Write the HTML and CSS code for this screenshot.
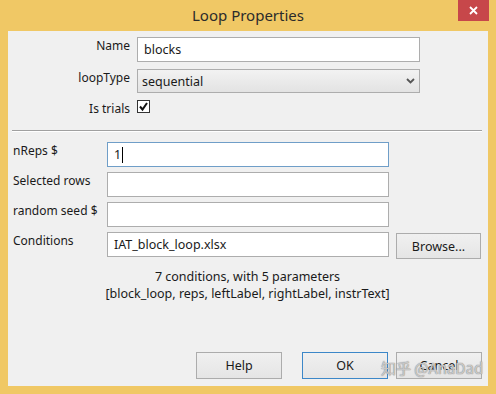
FILE: index.html
```html
<!DOCTYPE html>
<html lang="en">
<head>
    <meta charset="UTF-8">
    <title>Loop Properties</title>
    <link rel="stylesheet" href="styles.css">
</head>
<body>

    <div class="window">
        <div class="titlebar">
            <span class="title">Loop Properties</span>
            <div class="close">
                <svg width="11" height="11" viewBox="0 0 11 11">
                    <path d="M2 2 L9 9 M9 2 L2 9" stroke="#fff" stroke-width="1.8"/>
                </svg>
            </div>
        </div>

        <div class="client">
            <div class="top-form">
                <label class="lbl">Name</label>
                <div class="field name-field">blocks</div>

                <label class="lbl">loopType</label>
                <div class="field select">
                    <span>sequential</span>
                    <svg width="9" height="6" viewBox="0 0 9 6">
                        <path d="M1 1 L4.5 4.5 L8 1" fill="none" stroke="#555" stroke-width="1.8"/>
                    </svg>
                </div>

                <label class="lbl">Is trials</label>
                <div class="checkbox">
                    <svg width="11" height="11" viewBox="0 0 11 11">
                        <path d="M2 5.5 L4.5 8.5 L9 2" fill="none" stroke="#111" stroke-width="2"/>
                    </svg>
                </div>
            </div>

            <div class="separator"></div>

            <div class="bottom-form">
                <label class="lbl2">nReps $</label>
                <div class="field focused">1<span class="caret"></span></div>
                <div></div>

                <label class="lbl2">Selected rows</label>
                <div class="field"></div>
                <div></div>

                <label class="lbl2">random seed $</label>
                <div class="field"></div>
                <div></div>

                <label class="lbl2">Conditions</label>
                <div class="field">IAT_block_loop.xlsx</div>
                <button class="btn browse">Browse...</button>
            </div>

            <div class="info">
                <p>7 conditions, with 5 parameters</p>
                <p>[block_loop, reps, leftLabel, rightLabel, instrText]</p>
            </div>

            <div class="actions">
                <button class="btn">Help</button>
                <button class="btn default">OK</button>
                <button class="btn">Cancel</button>
            </div>
        </div>

        <div class="watermark">知乎 @AnaDad</div>
    </div>

</body>
</html>
```

FILE: styles.css
```css
* {
    box-sizing: border-box;
}
body {
    margin: 0;
    font-family: "Noto Sans", "Open Sans", sans-serif;
    font-size: 12px;
    color: #1a1a1a;
}
.window {
    position: relative;
    width: 496px;
    height: 394px;
    background: #f0c865;
    padding: 0 8px 8px 8px;
    display: flex;
    flex-direction: column;
}
.titlebar {
    height: 31px;
    display: flex;
    justify-content: center;
    align-items: center;
    position: relative;
}
.title {
    font-size: 15px;
    color: #2b2b2b;
    margin-top: -2px;
}
.close {
    position: absolute;
    right: -1px;
    top: 0;
    width: 31px;
    height: 21px;
    background: #c7474a;
    display: flex;
    justify-content: center;
    align-items: center;
}
.client {
    flex: 1;
    background: #f0f0f0;
    display: flex;
    flex-direction: column;
    padding: 6px 6px 7px 5px;
}
.top-form {
    display: grid;
    grid-template-columns: 117px 283px;
    column-gap: 7px;
    grid-template-rows: 25px 24px 13px;
    row-gap: 7px;
}
.lbl {
    text-align: right;
    line-height: 18px;
}
.field {
    background: #fff;
    border: 1px solid #adadad;
    height: 25px;
    padding: 0 6px;
    display: flex;
    align-items: center;
    font-size: 12.5px;
}
.select {
    height: 24px;
    background: linear-gradient(#f2f2f2, #e3e3e3);
    justify-content: space-between;
    padding: 0 4px 0 4px;
}
.checkbox {
    width: 13px;
    height: 13px;
    border: 1px solid #333;
    background: #fff;
    display: flex;
    align-items: center;
    justify-content: center;
}
.separator {
    margin: 17px 0 0 -1px;
    width: 470px;
    height: 2px;
    border-top: 1px solid #a0a0a0;
    border-bottom: 1px solid #fff;
}
.bottom-form {
    display: grid;
    grid-template-columns: 87px 282px 85px;
    column-gap: 7px;
    grid-auto-rows: 25px;
    row-gap: 5px;
    margin-top: 10px;
}
.lbl2 {
    line-height: 18px;
}
.focused {
    border-color: #6f9ec8;
}
.caret {
    display: inline-block;
    width: 1px;
    height: 16px;
    background: #000;
    margin-left: 1px;
}
.btn {
    font-family: inherit;
    font-size: 12.5px;
    color: #1a1a1a;
    border: 1px solid #acacac;
    background: linear-gradient(#f0f0f0, #e5e5e5);
    width: 86px;
    height: 27px;
    padding: 0;
}
.browse {
    width: 85px;
    height: 26px;
    margin-top: 1px;
}
.default {
    border-color: #3c87c8;
}
.info {
    text-align: center;
    margin-top: 11px;
    line-height: 17px;
    font-size: 12.5px;
}
.info p {
    margin: 0;
}
.actions {
    margin-top: auto;
    display: flex;
    justify-content: flex-end;
    gap: 8px;
}
.actions .btn:first-child {
    margin-right: 12px;
}
.watermark {
    position: absolute;
    left: 381px;
    top: 357px;
    font-size: 15px;
    color: rgba(255, 255, 255, 0.55);
    text-shadow: 0 0 1px #888, 0 0 1px #888;
    font-family: "Noto Sans CJK SC", "Noto Sans", sans-serif;
}
```
